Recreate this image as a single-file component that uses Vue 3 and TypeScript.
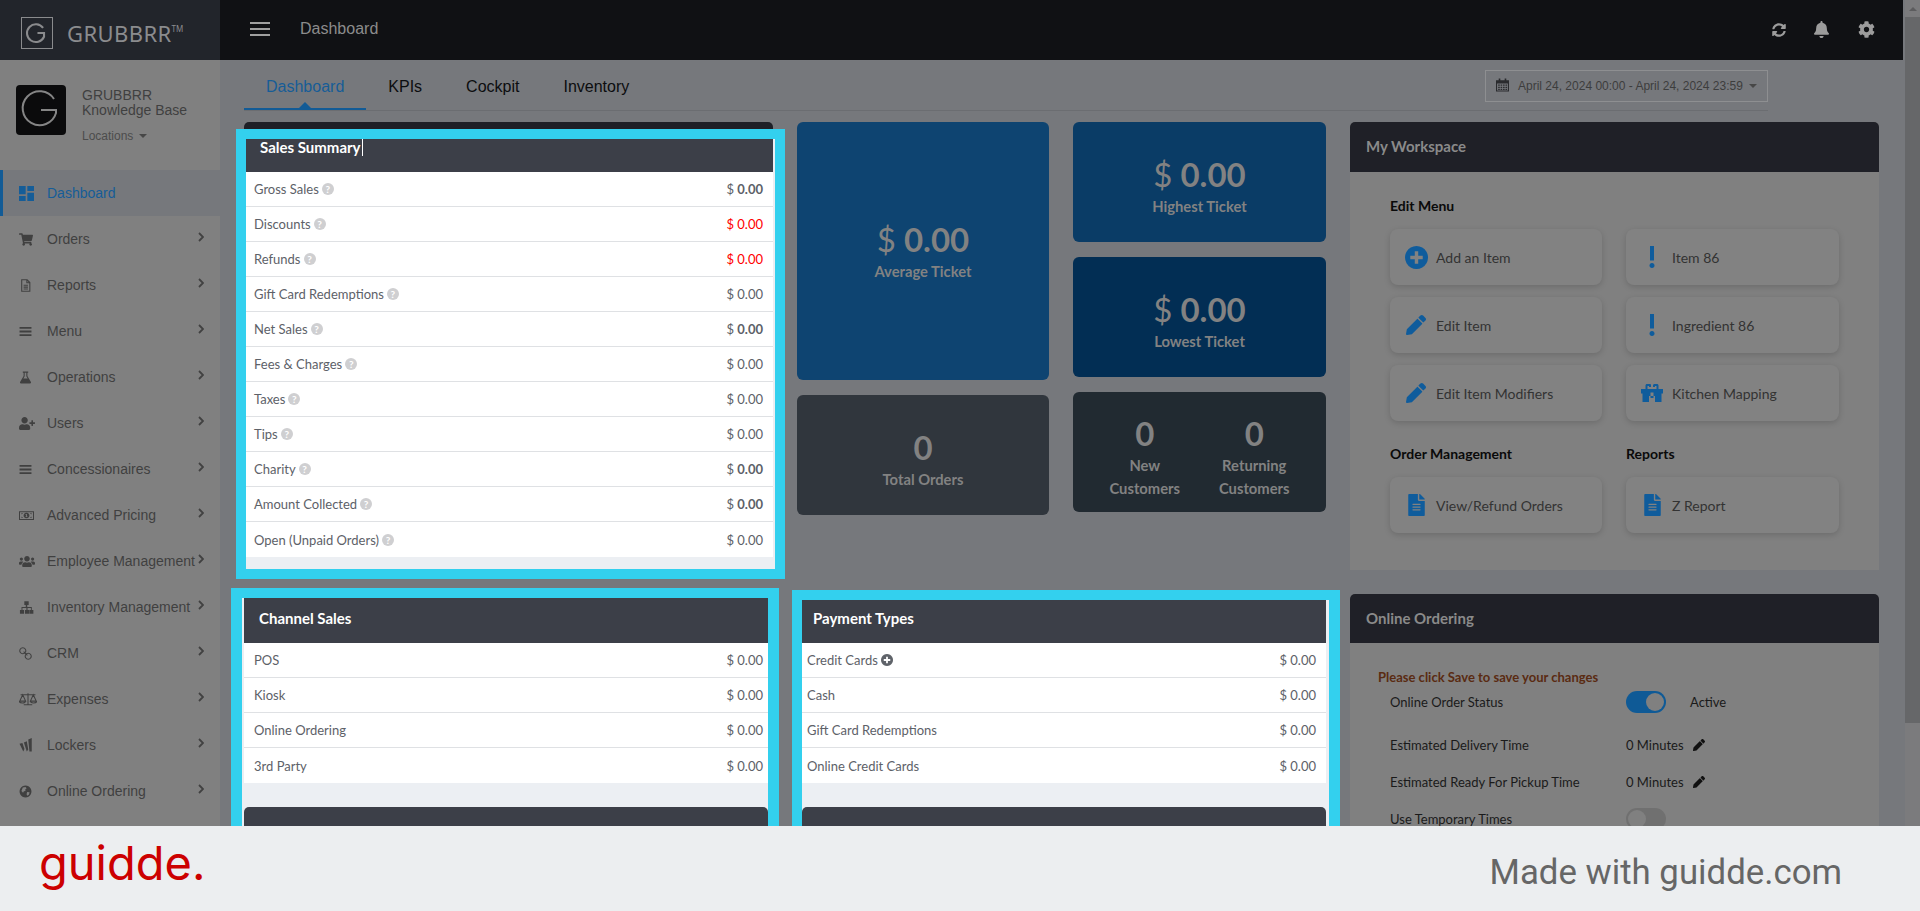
<script setup lang="ts">
interface Icon {
  box: string
  fill?: string
  line?: string
}

const icons: Record<string, Icon> = {
  dashboard: { box: '3 3 18 18', fill: 'M3 13h8V3H3v10zm0 8h8v-6H3v6zm10 0h8V11h-8v10zm0-18v6h8V3h-8z' },
  cart: {
    box: '0 0 576 512',
    fill: 'M528.12 301.319l47.273-208C578.806 78.301 567.391 64 551.99 64H159.208l-9.166-44.81C147.758 8.021 137.93 0 126.529 0H24C10.745 0 0 10.745 0 24v16c0 13.255 10.745 24 24 24h69.883l70.248 343.435C147.325 417.1 136 435.222 136 456c0 30.928 25.072 56 56 56s56-25.072 56-56c0-15.674-6.447-29.835-16.824-40h209.647C430.447 426.165 424 440.326 424 456c0 30.928 25.072 56 56 56s56-25.072 56-56c0-22.172-12.888-41.332-31.579-50.405l5.517-24.276c3.413-15.018-8.002-29.319-23.403-29.319H218.117l-6.545-32h293.145c11.206 0 20.92-7.754 23.403-18.681z',
  },
  report: { box: '0 0 24 24', line: 'M5 1.5h10l5 5v16H5z M14.5 1.5v5.5h5.5 M8.5 11.5h8 M8.5 15h8 M8.5 18.5h8' },
  bars: { box: '0 0 24 24', fill: 'M1 3.5h22v3.5H1z M1 10.2h22v3.5H1z M1 17h22v3.5H1z' },
  flask: {
    box: '0 0 24 24',
    fill: 'M7 1h10v2h-1.5v6l6.5 11.5c.6 1.2-.2 2.5-1.5 2.5h-17c-1.3 0-2.1-1.3-1.5-2.5L8.5 9V3H7z M10.5 3v6.6L8 14h8l-2.5-4.4V3z',
  },
  userPlus: {
    box: '0 0 640 512',
    fill: 'M624 208h-64v-64c0-8.8-7.2-16-16-16h-32c-8.8 0-16 7.2-16 16v64h-64c-8.8 0-16 7.2-16 16v32c0 8.8 7.2 16 16 16h64v64c0 8.8 7.2 16 16 16h32c8.8 0 16-7.2 16-16v-64h64c8.8 0 16-7.2 16-16v-32c0-8.8-7.2-16-16-16zm-400 48c70.7 0 128-57.3 128-128S294.7 0 224 0 96 57.3 96 128s57.3 128 128 128zm89.6 32h-16.7c-22.2 10.2-46.9 16-72.9 16s-50.6-5.8-72.9-16h-16.7C60.2 288 0 348.2 0 422.4V464c0 26.5 21.5 48 48 48h352c26.5 0 48-21.5 48-48v-41.6c0-74.2-60.2-134.4-134.4-134.4z',
  },
  money: {
    box: '0 0 24 16',
    fill: 'M0 1h24v14H0z M1.6 2.6v10.8h20.8V2.6z M4 4h2.5L4 6.5z M20 4v2.5L17.5 4z M4 12v-2.5L6.5 12z M20 12h-2.5L20 9.5z M12 3.4a4.6 4.6 0 1 1-.01 0z M12.6 5.4h-1.3l-1.2.9.5.9.7-.4v2.6h-1v1h3.4v-1h-1.1z',
  },
  users: {
    box: '0 0 640 512',
    fill: 'M96 224c35.3 0 64-28.7 64-64s-28.7-64-64-64-64 28.7-64 64 28.7 64 64 64zm448 0c35.3 0 64-28.7 64-64s-28.7-64-64-64-64 28.7-64 64 28.7 64 64 64zm32 32h-64c-17.6 0-33.5 7.1-45.1 18.6 40.3 22.1 68.9 62 75.1 109.4h66c17.7 0 32-14.3 32-32v-32c0-35.3-28.7-64-64-64zm-256 0c61.9 0 112-50.1 112-112S381.9 32 320 32 208 82.1 208 144s50.1 112 112 112zm76.8 32h-8.3c-20.8 10-43.9 16-68.5 16s-47.6-6-68.5-16h-8.3C179.6 288 128 339.6 128 403.2V432c0 26.5 21.5 48 48 48h288c26.5 0 48-21.5 48-48v-28.8c0-63.6-51.6-115.2-115.2-115.2zm-223.7-13.4C161.5 263.1 145.6 256 128 256H64c-35.3 0-64 28.7-64 64v32c0 17.7 14.3 32 32 32h65.9c6.3-47.4 34.9-87.3 75.2-109.4z',
  },
  sitemap: {
    box: '0 0 24 20',
    fill: 'M8.5 0h7v6h-2.3v3h7.3v5h2.5v6h-6.5v-6h2.5v-3.4h-5.3V14h2.3v6h-6.5v-6h2.3v-3.4H5.5V14H8v6H1.5v-6H4V9h6.8V6H8.500z',
  },
  chain: { box: '0 0 24 24', line: 'M7 1.500a5.500 5.500 0 1 0 .01 0z M17 11.500a5.500 5.500 0 1 0 .01 0z M8.500 8.500l7 7' },
  scales: { box: '0 0 34 26', line: 'M17 2v21 M9 24h16 M3 5h28 M7 5L1.500 17h11z M27 5l-5.500 12h11z M.5 17a6 3.500 0 0 0 12 0 M21.500 17a6 3.500 0 0 0 12 0' },
  lockers: {
    box: '0 0 24 24',
    fill: 'M0 10l5-1.500L8.500 19 6.500 23z M7.500 7.500l5-2L15 19.500 12.500 23z M15 2.500L21 0v23h-4z',
  },
  globe: {
    box: '0 0 24 24',
    fill: 'M12 1a11 11 0 1 0 .01 0z M7 4.500l5-1 2 2.500-2.500 2.500.5 2.500-3 .5-1.500 3-3-3.500z M15 13l4.500.5-1 4-3 2.500-1.500-3z',
  },
  plusCircle: {
    box: '0 0 24 24',
    fill: 'M12 0a12 12 0 1 0 .01 0z M10.200 5.500h3.600v4.700h4.700v3.600h-4.700v4.700h-3.600v-4.700H5.500v-3.600h4.700z',
  },
  pencil: {
    box: '0 0 512 512',
    fill: 'M497.9 142.1l-46.1 46.1c-4.7 4.7-12.3 4.7-17 0l-111-111c-4.7-4.7-4.7-12.3 0-17l46.1-46.1c18.7-18.7 49.1-18.7 67.9 0l60.1 60.1c18.8 18.7 18.8 49.1 0 67.9zM284.2 99.8L21.6 362.4.4 483.9c-2.9 16.4 11.4 30.6 27.8 27.8l121.5-21.3 262.6-262.6c4.7-4.7 4.7-12.3 0-17l-111-111c-4.8-4.7-12.4-4.7-17.1 0z',
  },
  bang: { box: '0 0 22 22', fill: 'M9 0h4v14.500H9z M11 17a2.500 2.500 0 1 1-.01 0z' },
  kitchen: {
    box: '0 0 22 18',
    fill: 'M0 5h4.500V1.500C4.500.7 5.200 0 6 0h3c.8 0 1 .7 1 1.500V3H8V2H6.500v3H15.500V2H14v1h-2V1.500C12 .7 12.700 0 13.500 0H16c.8 0 1.500.7 1.500 1.500V5H22v4.500h-1.500V18H14v-6h-6v6H1.500V9.500H0z M9.500 8.500h3V14h-3z',
  },
  file: {
    box: '0 0 384 512',
    fill: 'M224 136V0H24C10.700 0 0 10.700 0 24v464c0 13.300 10.700 24 24 24h336c13.300 0 24-10.700 24-24V160H248c-13.200 0-24-10.800-24-24zm64 236c0 6.600-5.400 12-12 12H108c-6.600 0-12-5.400-12-12v-8c0-6.600 5.400-12 12-12h168c6.600 0 12 5.400 12 12v8zm0-64c0 6.600-5.400 12-12 12H108c-6.600 0-12-5.400-12-12v-8c0-6.600 5.400-12 12-12h168c6.600 0 12 5.400 12 12v8zm0-72v8c0 6.600-5.400 12-12 12H108c-6.600 0-12-5.400-12-12v-8c0-6.600 5.400-12 12-12h168c6.600 0 12 5.400 12 12zm96-114.100v6.100H256V0h6.100c6.400 0 12.500 2.500 17 7l97.900 98c4.500 4.500 7 10.600 7 16.900z',
  },
  sync: {
    box: '0 0 512 512',
    fill: 'M370.72 133.28C339.458 104.008 298.888 87.962 255.848 88c-77.458.068-144.328 53.178-162.791 126.85-1.344 5.363-6.122 9.15-11.651 9.15H24.103c-7.498 0-13.194-6.807-11.807-14.176C33.933 94.924 134.813 8 256 8c66.448 0 126.791 26.136 171.315 68.685L463.03 40.97C478.149 25.851 504 36.559 504 57.941V192c0 13.255-10.745 24-24 24H345.941c-21.382 0-32.09-25.851-16.971-40.971l41.75-41.749zM32 296h134.059c21.382 0 32.09 25.851 16.971 40.971l-41.75 41.75c31.262 29.273 71.835 45.319 114.876 45.28 77.418-.07 144.315-53.144 162.787-126.849 1.344-5.363 6.122-9.15 11.651-9.15h57.304c7.498 0 13.194 6.807 11.807 14.176C478.067 417.076 377.187 504 256 504c-66.448 0-126.791-26.136-171.315-68.685L48.97 471.03C33.851 486.149 8 475.441 8 454.059V320c0-13.255 10.745-24 24-24z',
  },
  bell: {
    box: '0 0 448 512',
    fill: 'M224 512c35.32 0 63.97-28.65 63.97-64H160.03c0 35.35 28.65 64 63.97 64zm215.39-149.71c-19.32-20.76-55.47-51.99-55.47-154.29 0-77.7-54.48-139.9-127.94-155.16V32c0-17.67-14.32-32-31.98-32s-31.98 14.33-31.98 32v20.84C118.56 68.1 64.08 130.3 64.08 208c0 102.3-36.15 133.53-55.47 154.29-6 6.45-8.66 14.16-8.61 21.71.11 16.4 12.98 32 32.1 32h383.8c19.12 0 32-15.6 32.1-32 .05-7.55-2.61-15.27-8.61-21.71z',
  },
  cog: {
    box: '0 0 512 512',
    fill: 'M487.4 315.7l-42.6-24.6c4.3-23.2 4.3-47 0-70.2l42.6-24.6c4.9-2.8 7.1-8.6 5.5-14-11.1-35.6-30-67.8-54.7-94.6-3.8-4.1-10-5.1-14.8-2.3L380.8 110c-17.9-15.4-38.5-27.3-60.8-35.1V25.8c0-5.6-3.9-10.5-9.4-11.7-36.7-8.2-74.3-7.8-109.2 0-5.5 1.2-9.4 6.1-9.4 11.7V75c-22.2 7.9-42.8 19.8-60.8 35.1L88.7 85.5c-4.9-2.8-11-1.9-14.8 2.3-24.7 26.7-43.6 58.9-54.7 94.6-1.7 5.4.6 11.2 5.5 14L67.3 221c-4.3 23.2-4.3 47 0 70.2l-42.6 24.6c-4.9 2.8-7.1 8.6-5.5 14 11.1 35.6 30 67.8 54.7 94.6 3.8 4.1 10 5.1 14.8 2.3l42.6-24.6c17.9 15.4 38.5 27.3 60.8 35.1v49.2c0 5.6 3.9 10.5 9.4 11.7 36.7 8.2 74.3 7.8 109.2 0 5.5-1.2 9.4-6.1 9.4-11.7v-49.2c22.2-7.9 42.8-19.8 60.8-35.1l42.6 24.6c4.9 2.8 11 1.9 14.8-2.3 24.7-26.7 43.6-58.9 54.7-94.6 1.5-5.5-.7-11.3-5.6-14.1zM256 336c-44.1 0-80-35.9-80-80s35.9-80 80-80 80 35.9 80 80-35.9 80-80 80z',
  },
  calendar: {
    box: '0 0 24 24',
    fill: 'M5 0h3v3h8V0h3v3h5v21H0V3h5z M2 9v13h20V9z M4 11h3v2.500H4z M8.500 11h3v2.500h-3z M13 11h3v2.500h-3z M17.500 11h3v2.500h-3z M4 15h3v2.500H4z M8.500 15h3v2.500h-3z M13 15h3v2.500h-3z M17.500 15h3v2.500h-3z M4 19h3v2H4z M8.500 19h3v2h-3z M13 19h3v2h-3z M17.500 19h3v2h-3z',
  },
}

const navItems = [
  { label: 'Dashboard', icon: 'dashboard', active: true },
  { label: 'Orders', icon: 'cart' },
  { label: 'Reports', icon: 'report' },
  { label: 'Menu', icon: 'bars' },
  { label: 'Operations', icon: 'flask' },
  { label: 'Users', icon: 'userPlus' },
  { label: 'Concessionaires', icon: 'bars' },
  { label: 'Advanced Pricing', icon: 'money' },
  { label: 'Employee Management', icon: 'users' },
  { label: 'Inventory Management', icon: 'sitemap' },
  { label: 'CRM', icon: 'chain' },
  { label: 'Expenses', icon: 'scales' },
  { label: 'Lockers', icon: 'lockers' },
  { label: 'Online Ordering', icon: 'globe' },
]

const tabs = ['Dashboard', 'KPIs', 'Cockpit', 'Inventory']

const salesRows = [
  { label: 'Gross Sales', bold: true },
  { label: 'Discounts', red: true },
  { label: 'Refunds', red: true },
  { label: 'Gift Card Redemptions' },
  { label: 'Net Sales', bold: true },
  { label: 'Fees & Charges' },
  { label: 'Taxes' },
  { label: 'Tips' },
  { label: 'Charity', bold: true },
  { label: 'Amount Collected', bold: true },
  { label: 'Open (Unpaid Orders)' },
]

const channelRows = ['POS', 'Kiosk', 'Online Ordering', '3rd Party']
const paymentRows = ['Credit Cards', 'Cash', 'Gift Card Redemptions', 'Online Credit Cards']

const editMenu = [
  { label: 'Add an Item', icon: 'plusCircle', size: 'circle' },
  { label: 'Item 86', icon: 'bang', size: 'bang' },
  { label: 'Edit Item', icon: 'pencil', size: 'pen' },
  { label: 'Ingredient 86', icon: 'bang', size: 'bang' },
  { label: 'Edit Item Modifiers', icon: 'pencil', size: 'pen' },
  { label: 'Kitchen Mapping', icon: 'kitchen', size: 'kit' },
]
</script>

<template>
  <div class="screen">
    <div class="upper">
      <div class="page">
        <header class="topbar">
          <div class="brand">
            <div class="brand-mark">
              <svg viewBox="0 0 32 32" class="g-mark">
                <path d="M22.500 10.500a9.500 9.500 0 1 0 1 9.500v-4H16.500" />
              </svg>
            </div>
            <span class="brand-name">GRUBBRR<sup>TM</sup></span>
          </div>
          <div class="topbar-main">
            <div class="burger"><i></i><i></i><i></i></div>
            <span class="topbar-title">Dashboard</span>
            <div class="top-icons">
              <svg :viewBox="icons.sync.box" class="top-sync"><path :d="icons.sync.fill" /></svg>
              <svg :viewBox="icons.bell.box" class="top-bell"><path :d="icons.bell.fill" /></svg>
              <svg :viewBox="icons.cog.box" class="top-cog"><path :d="icons.cog.fill" /></svg>
            </div>
          </div>
        </header>

        <div class="shell">
          <aside class="sidebar">
            <div class="org">
              <div class="org-avatar">
                <svg viewBox="0 0 50 50" class="org-g">
                  <path d="M38 14a17 17 0 1 0 2 14v-3H25" />
                </svg>
              </div>
              <div class="org-text">
                <div class="org-name">GRUBBRR<br />Knowledge Base</div>
                <div class="org-loc">Locations <span class="caret"></span></div>
              </div>
            </div>
            <nav class="nav">
              <div
                v-for="item in navItems"
                :key="item.label"
                :class="['nav-item', { active: item.active }]"
              >
                <span class="nav-icon">
                  <svg :viewBox="icons[item.icon].box" :class="'ni-' + item.icon">
                    <path v-if="icons[item.icon].fill" :d="icons[item.icon].fill" fill-rule="evenodd" />
                    <path v-if="icons[item.icon].line" :d="icons[item.icon].line" class="stroked" />
                  </svg>
                </span>
                <span class="nav-label">{{ item.label }}</span>
                <svg v-if="!item.active" viewBox="0 0 6 10" class="chevron"><path d="M1 1l4 4-4 4" /></svg>
              </div>
            </nav>
          </aside>

          <main class="main">
            <div class="tabs-row">
              <div class="tabs">
                <div v-for="(tab, index) in tabs" :key="tab" :class="['tab', { current: index === 0 }]">{{ tab }}</div>
              </div>
              <div class="date-range">
                <svg :viewBox="icons.calendar.box" class="date-icon">
                  <path :d="icons.calendar.fill" fill-rule="evenodd" />
                </svg>
                <span>April 24, 2024 00:00 - April 24, 2024 23:59</span>
                <span class="caret"></span>
              </div>
            </div>

            <div class="dashboard">
              <div class="left-block">
                <div class="top-row">
                  <div class="sales-col">
                    <div class="panel-peek"></div>
                    <section class="frame sales-frame">
                      <div class="light-head sales-head">
                        <span>Sales Summary</span><i class="text-caret"></i>
                      </div>
                      <div class="rows">
                        <div v-for="row in salesRows" :key="row.label" class="row">
                          <span class="row-label">{{ row.label }}<b class="help">?</b></span>
                          <span :class="['row-value', { red: row.red }]">$ <span :class="{ strong: row.bold }">0.00</span></span>
                        </div>
                      </div>
                    </section>
                  </div>

                  <div class="stats">
                    <div class="stats-col">
                      <div class="stat stat-avg">
                        <div class="stat-value"><span class="dollar">$</span> 0.00</div>
                        <div class="stat-label">Average Ticket</div>
                      </div>
                      <div class="stat stat-short stat-total">
                        <div class="stat-value">0</div>
                        <div class="stat-label">Total Orders</div>
                      </div>
                    </div>
                    <div class="stats-col">
                      <div class="stat stat-short stat-high">
                        <div class="stat-value"><span class="dollar">$</span> 0.00</div>
                        <div class="stat-label">Highest Ticket</div>
                      </div>
                      <div class="stat stat-short stat-low">
                        <div class="stat-value"><span class="dollar">$</span> 0.00</div>
                        <div class="stat-label">Lowest Ticket</div>
                      </div>
                      <div class="stat-cust">
                        <div class="cust">
                          <div class="stat-value">0</div>
                          <div class="stat-label">New<br />Customers</div>
                        </div>
                        <div class="cust">
                          <div class="stat-value">0</div>
                          <div class="stat-label">Returning<br />Customers</div>
                        </div>
                      </div>
                    </div>
                  </div>
                </div>

                <div class="bottom-row">
                  <section class="frame channel-frame">
                    <div class="light-head">Channel Sales</div>
                    <div class="rows">
                      <div v-for="label in channelRows" :key="label" class="row">
                        <span class="row-label">{{ label }}</span>
                        <span class="row-value">$ 0.00</span>
                      </div>
                    </div>
                    <div class="next-head"></div>
                  </section>
                  <section class="frame payment-frame">
                    <div class="light-head">Payment Types</div>
                    <div class="rows">
                      <div v-for="(label, index) in paymentRows" :key="label" class="row">
                        <span class="row-label">
                          {{ label }}
                          <svg v-if="index === 0" :viewBox="icons.plusCircle.box" class="row-plus">
                            <path :d="icons.plusCircle.fill" fill-rule="evenodd" />
                          </svg>
                        </span>
                        <span class="row-value">$ 0.00</span>
                      </div>
                    </div>
                    <div class="next-head"></div>
                  </section>
                </div>
              </div>

              <div class="right-col">
                <section class="panel">
                  <div class="panel-head">My Workspace</div>
                  <div class="workspace">
                    <div class="ws-title">Edit Menu</div>
                    <div class="ws-grid">
                      <div v-for="btn in editMenu" :key="btn.label" class="ws-btn">
                        <span class="ws-icon">
                          <svg :viewBox="icons[btn.icon].box" :class="'wi-' + btn.size">
                            <path :d="icons[btn.icon].fill" fill-rule="evenodd" />
                          </svg>
                        </span>
                        {{ btn.label }}
                      </div>
                    </div>
                    <div class="ws-grid ws-second">
                      <div class="ws-title">Order Management</div>
                      <div class="ws-title">Reports</div>
                      <div class="ws-btn">
                        <span class="ws-icon"><svg :viewBox="icons.file.box" class="wi-file"><path :d="icons.file.fill" /></svg></span>
                        View/Refund Orders
                      </div>
                      <div class="ws-btn">
                        <span class="ws-icon"><svg :viewBox="icons.file.box" class="wi-file"><path :d="icons.file.fill" /></svg></span>
                        Z Report
                      </div>
                    </div>
                  </div>
                </section>

                <section class="panel online">
                  <div class="panel-head online-head">Online Ordering</div>
                  <div class="online-body">
                    <div class="notice">Please click Save to save your changes</div>
                    <div class="opt opt-first">
                      <span class="opt-label">Online Order Status</span>
                      <span class="toggle on"><i></i></span>
                      <span class="opt-state">Active</span>
                    </div>
                    <div class="opt">
                      <span class="opt-label">Estimated Delivery Time</span>
                      <span>0 Minutes</span>
                      <svg :viewBox="icons.pencil.box" class="opt-pen"><path :d="icons.pencil.fill" /></svg>
                    </div>
                    <div class="opt">
                      <span class="opt-label">Estimated Ready For Pickup Time</span>
                      <span>0 Minutes</span>
                      <svg :viewBox="icons.pencil.box" class="opt-pen"><path :d="icons.pencil.fill" /></svg>
                    </div>
                    <div class="opt">
                      <span class="opt-label">Use Temporary Times</span>
                      <span class="toggle"><i></i></span>
                    </div>
                  </div>
                </section>
              </div>
            </div>
          </main>
        </div>
      </div>

      <div class="scrollbar">
        <div class="sb-up"><span></span></div>
        <div class="sb-thumb"></div>
        <div class="sb-track"></div>
      </div>
    </div>

    <footer class="guidde">
      <span class="guidde-logo">guidde.</span>
      <span class="guidde-made">Made with guidde.com</span>
    </footer>
  </div>
</template>

<style scoped>
.screen {
  width: 1920px;
  height: 911px;
  overflow: hidden;
  display: flex;
  flex-direction: column;
  background: #76787c;
  font-family: "Liberation Sans", Arial, sans-serif;
}

.upper {
  flex: none;
  height: 826px;
  display: flex;
  overflow: hidden;
}

.page {
  flex: 1;
  min-width: 0;
  display: flex;
  flex-direction: column;
}

.topbar {
  flex: none;
  height: 60px;
  margin-right: 2px;
  display: flex;
  background: #101114;
}

.brand {
  flex: 0 0 220px;
  background: #22252b;
  display: flex;
  align-items: center;
  padding-left: 21px;
  padding-top: 6px;
  box-sizing: border-box;
}

.brand-mark {
  width: 32px;
  height: 32px;
  box-sizing: border-box;
  border: 1.5px solid #8a8b8d;
  margin-right: 14px;
}

.g-mark {
  display: block;
  width: 100%;
  height: 100%;
  fill: none;
  stroke: #8a8b8d;
  stroke-width: 2.200;
}

.brand-name {
  font-family: "Noto Sans", sans-serif;
  font-size: 22px;
  line-height: 32px;
  letter-spacing: 0.4px;
  color: #8b8c8e;
}

.brand-name sup {
  font-size: 8px;
  vertical-align: 10px;
  line-height: 0;
  letter-spacing: 0;
}

.topbar-main {
  flex: 1;
  display: flex;
  align-items: center;
  padding-left: 30px;
}

.burger {
  width: 20px;
  display: flex;
  flex-direction: column;
  gap: 4px;
  margin-right: 30px;
  margin-top: -2px;
}

.burger i {
  display: block;
  height: 2px;
  background: #a0a0a0;
}

.topbar-title {
  font-size: 16px;
  color: #8c8c8c;
  margin-top: -3px;
}

.top-icons {
  margin-left: auto;
  display: flex;
  align-items: center;
  padding-right: 28px;
  color: #9c9c9c;
  margin-top: -1px;
}

.top-icons svg {
  fill: #9c9c9c;
  display: block;
}

.top-sync {
  width: 14px;
  height: 14px;
  margin-right: 28px;
}

.top-bell {
  width: 15px;
  height: 17px;
  margin-right: 29px;
}

.top-cog {
  width: 17px;
  height: 17px;
}

.shell {
  flex: 1;
  min-height: 0;
  display: flex;
}

.sidebar {
  flex: 0 0 220px;
  background: #808080;
  display: flex;
  flex-direction: column;
}

.org {
  flex: none;
  height: 110px;
  box-sizing: border-box;
  padding: 25px 0 0 16px;
  display: flex;
}

.org-avatar {
  width: 50px;
  height: 50px;
  border-radius: 4px;
  background: #0b0b0c;
  margin-right: 16px;
}

.org-g {
  display: block;
  width: 50px;
  height: 50px;
  fill: none;
  stroke: #858585;
  stroke-width: 2;
}

.org-name {
  font-size: 14px;
  line-height: 15px;
  color: #404040;
  margin-top: 3px;
}

.org-loc {
  font-size: 12px;
  line-height: 14px;
  color: #4c4c4c;
  margin-top: 11px;
}

.caret {
  display: inline-block;
  width: 0;
  height: 0;
  margin-left: 2px;
  vertical-align: 2px;
  border-top: 4px solid #474747;
  border-left: 4px solid transparent;
  border-right: 4px solid transparent;
}

.nav-item {
  height: 46px;
  display: flex;
  align-items: center;
  box-sizing: border-box;
  padding-left: 19px;
  padding-right: 16px;
  font-size: 14px;
  color: #404040;
}

.nav-item.active {
  background: #76787c;
  border-left: 3px solid #125b96;
  padding-left: 16px;
  color: #155d98;
}

.nav-icon {
  flex: 0 0 28px;
  display: flex;
  align-items: center;
}

.nav-icon svg {
  display: block;
  width: 13px;
  height: 13px;
  fill: currentColor;
}

.nav-icon .ni-dashboard {
  width: 15px;
  height: 15px;
}

.nav-icon .ni-cart {
  width: 14px;
  height: 13px;
}

.nav-icon .ni-report {
  width: 13px;
  height: 15px;
}

.nav-icon .ni-userPlus,
.nav-icon .ni-users {
  width: 16px;
  height: 13px;
}

.nav-icon .ni-money {
  width: 15px;
  height: 11px;
}

.nav-icon .ni-sitemap {
  width: 15px;
  height: 13px;
}

.nav-icon .ni-scales {
  width: 18px;
  height: 14px;
}

.nav-icon .ni-lockers {
  width: 15px;
  height: 14px;
}

.stroked {
  fill: none;
  stroke: currentColor;
  stroke-width: 2;
}

.nav-label {
  white-space: nowrap;
}

.chevron {
  margin-left: auto;
  width: 6px;
  height: 10px;
  margin-top: -4px;
  fill: none;
  stroke: #414141;
  stroke-width: 1.800;
}

.main {
  flex: 1;
  min-width: 0;
  padding-left: 24px;
}

.tabs-row {
  width: 1524px;
  height: 51px;
  box-sizing: border-box;
  border-bottom: 1px solid #6b6d71;
  display: flex;
  justify-content: space-between;
}

.tabs {
  display: flex;
}

.tab {
  position: relative;
  height: 50px;
  box-sizing: border-box;
  padding: 17px 22px 0;
  font-size: 16px;
  line-height: 20px;
  color: #0c0d0f;
}

.tab.current {
  color: #165d97;
  border-bottom: 2px solid #125b96;
}

.tab.current::after {
  content: '';
  position: absolute;
  left: 50%;
  bottom: 0;
  margin-left: -6px;
  border-bottom: 6px solid #125b96;
  border-left: 6px solid transparent;
  border-right: 6px solid transparent;
}

.date-range {
  width: 283px;
  height: 32px;
  margin-top: 10px;
  box-sizing: border-box;
  border: 1px solid #8e8f91;
  display: flex;
  align-items: center;
  padding-left: 10px;
  font-size: 12px;
  color: #3d3d3d;
  white-space: nowrap;
}

.date-icon {
  width: 13px;
  height: 14px;
  margin-right: 9px;
  margin-top: -3px;
  fill: #2a2b2e;
}

.date-range .caret {
  margin-left: 6px;
  vertical-align: 0;
}

.dashboard {
  margin-top: 11px;
  display: flex;
  align-items: flex-start;
  gap: 24px;
}

.left-block {
  flex: 0 0 1082px;
  min-width: 0;
}

.top-row {
  height: 466px;
  display: flex;
}

.sales-col {
  flex: 0 0 531px;
  min-width: 0;
}

.panel-peek {
  width: 529px;
  height: 7px;
  background: #1f2027;
  border-radius: 5px 5px 0 0;
}

.frame {
  box-sizing: border-box;
  border: 10px solid #33d0ee;
  background: #eceff3;
  overflow: hidden;
  flex: none;
}

.sales-frame {
  width: 549px;
  height: 450px;
  margin-left: -8px;
  padding-right: 2px;
}

.light-head {
  height: 45px;
  box-sizing: border-box;
  padding: 11px 15px 0;
  background: #3c3f48;
  color: #fff;
  font-family: Lato, "Noto Sans", sans-serif;
  font-weight: 700;
  font-size: 15px;
  line-height: 18px;
}

.sales-head {
  height: 33px;
  padding: 0 14px;
  display: flex;
  align-items: flex-start;
  line-height: 16px;
}

.text-caret {
  display: block;
  width: 1px;
  height: 17px;
  background: #fff;
  margin-left: 1px;
}

.rows {
  background: #fff;
}

.row {
  height: 35px;
  box-sizing: border-box;
  border-bottom: 1px solid #dfe1e4;
  display: flex;
  align-items: center;
  justify-content: space-between;
  padding: 0 10px 0 8px;
  font-family: Lato, "Noto Sans", sans-serif;
  font-size: 13px;
  color: #5d6168;
}

.row:last-child {
  border-bottom: none;
}

.row-label {
  display: flex;
  align-items: center;
}

.help {
  display: inline-block;
  width: 12px;
  height: 12px;
  margin-left: 3px;
  border-radius: 50%;
  background: #cfcfd1;
  color: #fff;
  font-size: 10px;
  font-weight: 700;
  line-height: 12px;
  text-align: center;
}

.row-value.red {
  color: #ff0000;
}

.strong {
  font-weight: 700;
}

.stats {
  margin-left: 22px;
  display: flex;
  gap: 24px;
}

.stats-col {
  display: flex;
  flex-direction: column;
  gap: 15px;
  width: 252px;
}

.stats-col + .stats-col {
  width: 253px;
}

.stat,
.stat-cust {
  border-radius: 6px;
  color: #828282;
  font-family: Lato, "Noto Sans", sans-serif;
  text-align: center;
}

.stat {
  display: flex;
  flex-direction: column;
  align-items: center;
  justify-content: center;
}

.stat-avg {
  height: 258px;
  box-sizing: border-box;
  background: #0e4471;
}

.stat-short {
  height: 120px;
  padding-top: 8px;
  box-sizing: border-box;
}

.stat-total {
  background: #30363d;
}

.stat-high {
  background: #0a3c66;
}

.stat-low {
  background: #022e54;
}

.stat-value {
  font-size: 33px;
  font-weight: 700;
  line-height: 38px;
}

.dollar {
  font-weight: 400;
}

.stat-label {
  font-size: 14.750px;
  font-weight: 700;
  line-height: 23px;
  margin-top: 2px;
}

.stat-cust {
  height: 120px;
  padding: 22px 17px 0;
  box-sizing: border-box;
  background: #212a31;
  display: grid;
  grid-template-columns: 1fr 1fr;
}

.bottom-row {
  display: flex;
  align-items: flex-start;
  margin-left: -13px;
}

.channel-frame,
.payment-frame {
  width: 548px;
  height: 260px;
}

.channel-frame {
  border-left-width: 11px;
  border-right-width: 11px;
  padding-left: 2px;
}

.payment-frame {
  margin-left: 13px;
  margin-top: 2px;
  padding-right: 3px;
  border-right-width: 11px;
}

.payment-frame .light-head {
  height: 43px;
  padding: 9px 11px 0;
}

.payment-frame .row {
  padding: 0 10px 0 5px;
}

.channel-frame .row {
  padding-right: 5px;
  padding-left: 10px;
}

.next-head {
  margin-top: 24px;
  height: 40px;
  background: #3c3f48;
  border-radius: 5px 5px 0 0;
}

.row-plus {
  width: 12px;
  height: 12px;
  margin-left: 3px;
  fill: #5f6369;
}

.right-col {
  flex: 0 0 529px;
  display: flex;
  flex-direction: column;
  gap: 24px;
}

.panel {
  border-radius: 5px 5px 0 0;
  background: #808080;
  font-family: Lato, "Noto Sans", sans-serif;
  font-size: 13px;
  color: #1e1e1e;
}

.panel-head {
  height: 50px;
  box-sizing: border-box;
  padding: 15px 16px 0;
  background: #1f2027;
  border-radius: 5px 5px 0 0;
  color: #8a8a8a;
  font-weight: 700;
  font-size: 15px;
  line-height: 18px;
}

.online-head {
  height: 49px;
}

.workspace {
  height: 398px;
  box-sizing: border-box;
  padding: 24px 40px 0;
}

.ws-title {
  font-size: 14px;
  font-weight: 700;
  line-height: 20px;
  color: #0a0a0a;
  margin-bottom: 13px;
}

.ws-grid {
  display: grid;
  grid-template-columns: 212px 213px;
  column-gap: 24px;
  row-gap: 12px;
}

.ws-second {
  margin-top: 23px;
  row-gap: 0;
}

.ws-btn {
  height: 56px;
  display: flex;
  align-items: center;
  border-radius: 8px;
  background: #828282;
  box-shadow: 0 2px 6px rgba(0, 0, 0, 0.16);
  font-size: 14px;
  color: #333;
}

.ws-icon {
  flex: 0 0 46px;
  display: flex;
  justify-content: center;
  padding-left: 6px;
  box-sizing: border-box;
  fill: #0f5c9c;
}

.ws-icon svg {
  display: block;
}

.wi-circle {
  width: 23px;
  height: 23px;
}

.wi-bang {
  width: 22px;
  height: 22px;
}

.wi-pen {
  width: 20px;
  height: 20px;
}

.wi-kit {
  width: 22px;
  height: 18px;
}

.wi-file {
  width: 17px;
  height: 22px;
}

.online-body {
  padding: 24px 28px 0;
  height: 200px;
  box-sizing: border-box;
}

.notice {
  font-weight: 700;
  line-height: 20px;
  color: #5a2b12;
}

.opt {
  height: 30px;
  display: flex;
  align-items: center;
  padding-left: 12px;
  margin-bottom: 7px;
  color: #1a1a1a;
}

.opt-first {
  margin-bottom: 13px;
}

.opt-label {
  flex: 0 0 236px;
}

.toggle {
  position: relative;
  display: block;
  width: 40px;
  height: 22px;
  border-radius: 11px;
  background: #707070;
}

.toggle i {
  position: absolute;
  left: 2px;
  top: 2px;
  width: 18px;
  height: 18px;
  border-radius: 50%;
  background: #808080;
}

.toggle.on {
  background: #0f5a96;
}

.toggle.on i {
  left: 20px;
}

.opt-state {
  margin-left: 24px;
}

.opt-pen {
  width: 12px;
  height: 12px;
  margin-left: 9px;
  fill: #111;
}

.scrollbar {
  flex: 0 0 15px;
  display: flex;
  flex-direction: column;
  background: #7b7b7d;
}

.sb-up {
  flex: 0 0 17px;
  display: flex;
  align-items: center;
  justify-content: center;
}

.sb-up span {
  border-bottom: 4px solid #5c5c5e;
  border-left: 4px solid transparent;
  border-right: 4px solid transparent;
}

.sb-thumb {
  flex: 0 0 706px;
  background: #666769;
}

.sb-track {
  flex: 1;
}

.guidde {
  flex: 1;
  display: flex;
  align-items: center;
  justify-content: space-between;
  padding: 0 78px 0 39px;
  background: #eceef0;
}

.guidde-logo {
  font-family: Inter, sans-serif;
  font-size: 47px;
  font-weight: 400;
  line-height: 60px;
  color: #cc0000;
  margin-top: -12px;
}

.guidde-made {
  font-family: Roboto, sans-serif;
  font-size: 34.800px;
  color: #666;
  margin-top: 7px;
}
</style>

<style>
html,
body {
  margin: 0;
  overflow: hidden;
}
</style>
